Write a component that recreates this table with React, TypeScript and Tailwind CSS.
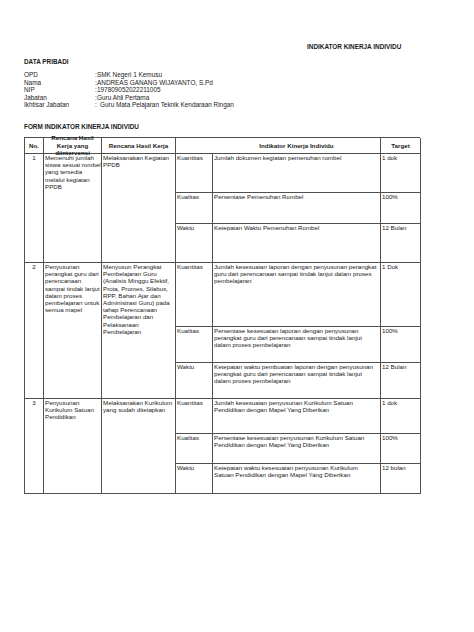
import React from "react";

const F = { fontFamily: '"Liberation Sans", Arial, sans-serif' };

function Cell({ children, span, center }: { children?: React.ReactNode; span?: boolean; center?: boolean }) {
  return (
    <div
      className={
        "border-r border-b border-[#505050] px-[1px] text-[6.2px] leading-[7.2px] text-[#1a1a1a] whitespace-nowrap overflow-visible " +
        (span ? "row-span-3 " : "") +
        (center ? "text-center" : "")
      }
    >
      {children}
    </div>
  );
}

function Lines({ t }: { t: string[] }) {
  return (
    <>
      {t.map((l, i) => (
        <div key={i}>{l}</div>
      ))}
    </>
  );
}

type Row = {
  no: string;
  rhk1: string[];
  rhk2: string[];
  items: { k: string; ind: string[]; t: string }[];
};

const rows: Row[] = [
  {
    no: "1",
    rhk1: ["Memenuhi jumlah", "siswa sesuai rombel", "yang tersedia", "melalui kegiatan", "PPDB"],
    rhk2: ["Melaksanakan Kegiatan", "PPDB"],
    items: [
      { k: "Kuantitas", ind: ["Jumlah dokumen kegiatan pemenuhan rombel"], t: "1 dok" },
      { k: "Kualitas", ind: ["Persentase Pemenuhan Rombel"], t: "100%" },
      { k: "Waktu", ind: ["Ketepatan Waktu Pemenuhan Rombel"], t: "12 Bulan" },
    ],
  },
  {
    no: "2",
    rhk1: ["Penyusunan", "perangkat guru dari", "perencanaan", "sampai tindak lanjut", "dalam proses", "pembelajaran untuk", "semua mapel"],
    rhk2: [
      "Menyusun Perangkat",
      "Pembelajaran Guru",
      "(Analisis Minggu Efektif,",
      "Prota, Promes, Silabus,",
      "RPP, Bahan Ajar dan",
      "Administrasi Guru) pada",
      "tahap Perencanaan",
      "Pembelajaran dan",
      "Pelaksanaan",
      "Pembelajaran",
    ],
    items: [
      {
        k: "Kuantitas",
        ind: [
          "Jumlah kesesuaian laporan  dengan penyusunan perangkat",
          "guru dari perencanaan sampai tindak lanjut dalam proses",
          "pembelajaran",
        ],
        t: "1 Dok",
      },
      {
        k: "Kualitas",
        ind: [
          "Persentase kesesuaian laporan dengan penyusunan",
          "perangkat guru dari perencanaan sampai tindak lanjut",
          "dalam proses pembelajaran",
        ],
        t: "100%",
      },
      {
        k: "Waktu",
        ind: [
          "Ketepatan waktu pembuatan  laporan dengan  penyusunan",
          "perangkat guru dari perencanaan sampai tindak lanjut",
          "dalam proses pembelajaran",
        ],
        t: "12 Bulan",
      },
    ],
  },
  {
    no: "3",
    rhk1: ["Penyusunan", "Kurikulum Satuan", "Pendidikan"],
    rhk2: ["Melaksanakan Kurikulum", "yang sudah ditetapkan"],
    items: [
      {
        k: "Kuantitas",
        ind: ["Jumlah kesesuaian  penyusunan Kurikulum Satuan", "Pendidikan dengan Mapel Yang Diberikan"],
        t: "1 dok",
      },
      {
        k: "Kualitas",
        ind: ["Persentase kesesuaian  penyusunan Kurikulum Satuan", "Pendidikan dengan Mapel Yang Diberikan"],
        t: "100%",
      },
      {
        k: "Waktu",
        ind: ["Ketepatan waktu kesesuaian  penyusunan Kurikulum", "Satuan Pendidikan dengan Mapel Yang Diberikan"],
        t: "12 bulan",
      },
    ],
  },
];

const pribadi: [string, string, boolean?][] = [
  ["OPD", "SMK Negeri 1 Kemusu"],
  ["Nama", "ANDREAS GANANG WIJAYANTO, S.Pd"],
  ["NIP", "197809052022211005"],
  ["Jabatan", "Guru Ahli Pertama"],
  ["Ikhtisar Jabatan", "Guru Mata Pelajaran Teknik Kendaraan Ringan", true],
];

function Head({ children }: { children: React.ReactNode }) {
  return (
    <div className="border-r border-b border-[#505050] flex items-center justify-center text-center font-bold text-[6.2px] leading-[7.4px] text-[#1a1a1a] whitespace-nowrap overflow-visible">
      <div>{children}</div>
    </div>
  );
}

export default function App() {
  return (
    <div className="w-[474px] h-[632px] bg-white overflow-hidden" style={F}>
      <div className="pl-[24px] pt-[43px] flex flex-col">
        <div className="h-[8px] pl-[283px] font-bold text-[6.4px] leading-[8px] text-[#1a1a1a] whitespace-nowrap">
          INDIKATOR KINERJA INDIVIDU
        </div>
        <div className="mt-[7px] h-[8px] font-bold text-[6.4px] leading-[8px] text-[#1a1a1a] whitespace-nowrap">
          DATA PRIBADI
        </div>
        <div className="mt-[5px] flex flex-col text-[6.4px] leading-[7.6px] text-[#1a1a1a]">
          {pribadi.map(([l, v, wide]) => (
            <div key={l} className="flex whitespace-nowrap">
              <div className="w-[71px]">{l}</div>
              <div className={wide ? "w-[5px]" : "w-[2px]"}>:</div>
              <div>{v}</div>
            </div>
          ))}
        </div>
        <div className="mt-[14px] h-[8px] font-bold text-[6.4px] leading-[8px] text-[#1a1a1a] whitespace-nowrap">
          FORM INDIKATOR KINERJA INDIVIDU
        </div>
        <div className="mt-[6px] w-[396px] grid grid-cols-[19px_58px_74px_37px_168px_40px] grid-rows-[16px_39px_31px_39px_64px_36px_36px_35px_30px_30px] border-l border-t border-[#505050]">
          <Head>No.</Head>
          <Head>
            <div>Rencana Hasil</div>
            <div>Kerja yang</div>
            <div>diintervensi</div>
          </Head>
          <Head>Rencana Hasil Kerja</Head>
          <div className="border-b border-[#505050]" />
          <Head>Indikator Kinerja Individu</Head>
          <Head>Target</Head>
          {rows.map((r) => (
            <React.Fragment key={r.no}>
              <Cell span center>
                {r.no}
              </Cell>
              <Cell span>
                <Lines t={r.rhk1} />
              </Cell>
              <Cell span>
                <Lines t={r.rhk2} />
              </Cell>
              {r.items.map((it) => (
                <React.Fragment key={it.k}>
                  <Cell>{it.k}</Cell>
                  <Cell>
                    <Lines t={it.ind} />
                  </Cell>
                  <Cell>{it.t}</Cell>
                </React.Fragment>
              ))}
            </React.Fragment>
          ))}
        </div>
      </div>
    </div>
  );
}
